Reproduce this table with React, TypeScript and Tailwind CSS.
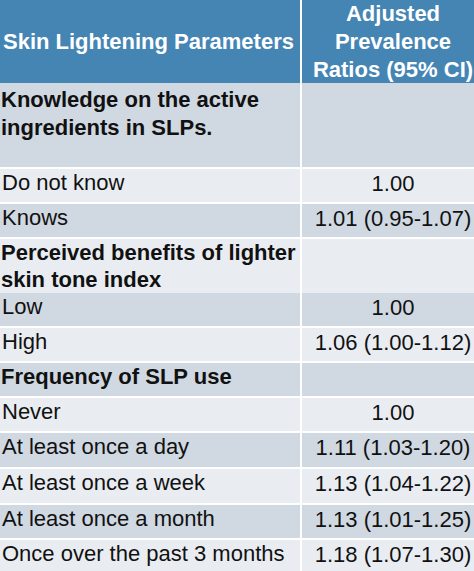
import React from "react";

type Row = { left: string[]; right: string; bold?: boolean; h: number; dark: boolean; pt?: string };

const rows: Row[] = [
  { left: ["Knowledge on the active", "ingredients in SLPs."], right: "", bold: true, h: 84, dark: true, pt: "pt-[3px]" },
  { left: ["Do not know"], right: "1.00", h: 33, dark: false },
  { left: ["Knows"], right: "1.01 (0.95-1.07)", h: 33, dark: true },
  { left: ["Perceived benefits of lighter", "skin tone index"], right: "", bold: true, h: 52, dark: false },
  { left: ["Low"], right: "1.00", h: 33, dark: true },
  { left: ["High"], right: "1.06 (1.00-1.12)", h: 33, dark: false },
  { left: ["Frequency of SLP use"], right: "", bold: true, h: 33, dark: true },
  { left: ["Never"], right: "1.00", h: 33, dark: false },
  { left: ["At least once a day"], right: "1.11 (1.03-1.20)", h: 34, dark: true },
  { left: ["At least once a week"], right: "1.13 (1.04-1.22)", h: 34, dark: false },
  { left: ["At least once a month"], right: "1.13 (1.01-1.25)", h: 33, dark: true },
  { left: ["Once over the past 3 months"], right: "1.18 (1.07-1.30)", h: 33, dark: false },
];

export default function App() {
  return (
    <div
      className="w-[474px] h-[571px] overflow-hidden bg-white text-[22px] text-[#111111]"
      style={{ fontFamily: '"Liberation Sans", Arial, sans-serif' }}
    >
      <div className="w-[484px] flex flex-col gap-[2px] bg-white">
        <div className="grid grid-cols-[300px_182px] gap-[2px] h-[81px]">
          <div className="bg-[#4585b4] text-white font-bold flex items-center pl-[3px] leading-[28px]">
            Skin Lightening Parameters
          </div>
          <div className="bg-[#4585b4] text-white font-bold flex flex-col items-center justify-center leading-[28px] text-center whitespace-nowrap">
            <span>Adjusted</span>
            <span>Prevalence</span>
            <span>Ratios (95% CI)</span>
          </div>
        </div>
        {rows.map((r, i) => {
          const bg = r.dark ? "bg-[#d0d8e2]" : "bg-[#e9edf2]";
          return (
            <div
              key={i}
              className="grid grid-cols-[300px_182px] gap-[2px]"
              style={{ height: r.h }}
            >
              <div
                className={`${bg} ${r.bold ? "font-bold pl-[1px]" : "pl-[2px]"} ${r.pt ?? ""} ${
                  r.left.length > 1 && !r.pt ? "leading-[27px]" : "leading-[28px]"
                } whitespace-nowrap`}
              >
                {r.left.map((l, j) => (
                  <div key={j}>{l}</div>
                ))}
              </div>
              <div className={`${bg} leading-[28px] text-center whitespace-nowrap pt-[1px]`}>{r.right}</div>
            </div>
          );
        })}
      </div>
    </div>
  );
}
